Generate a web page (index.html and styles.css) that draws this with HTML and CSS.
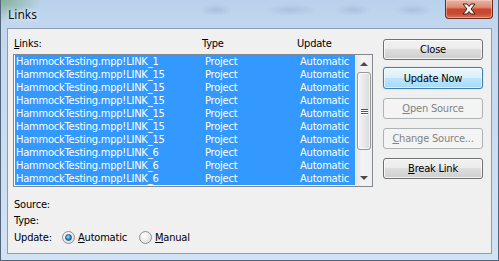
FILE: index.html
```html
<!DOCTYPE html>
<html>
<head>
<meta charset="utf-8">
<link rel="stylesheet" href="styles.css">
</head>
<body>
<div class="window">
  <div class="titlebar">
    <span class="title">Links</span>
    <div class="spacer"></div>
    <div class="close-x">
      <svg width="20" height="12" viewBox="0 0 20 12">
        <path d="M4 1 L8 1 L10 3.5 L12 1 L16 1 L12 6 L16 11 L12 11 L10 8.5 L8 11 L4 11 L8 6 Z" fill="#ffffff" stroke="#3b1a14" stroke-width="1" stroke-linejoin="round"/>
      </svg>
    </div>
  </div>
  <div class="client">
    <div class="leftcol">
      <div class="listhead">
        <span class="hcol hname"><u>L</u>inks:</span>
        <span class="hcol htype">Type</span>
        <span class="hcol hupd">Update</span>
      </div>
      <div class="listbox">
        <div class="rows">
          <div class="row"><span class="cname">HammockTesting.mpp!LINK_1</span><span class="ctype">Project</span><span class="cupd">Automatic</span></div>
          <div class="row"><span class="cname">HammockTesting.mpp!LINK_15</span><span class="ctype">Project</span><span class="cupd">Automatic</span></div>
          <div class="row"><span class="cname">HammockTesting.mpp!LINK_15</span><span class="ctype">Project</span><span class="cupd">Automatic</span></div>
          <div class="row"><span class="cname">HammockTesting.mpp!LINK_15</span><span class="ctype">Project</span><span class="cupd">Automatic</span></div>
          <div class="row"><span class="cname">HammockTesting.mpp!LINK_15</span><span class="ctype">Project</span><span class="cupd">Automatic</span></div>
          <div class="row"><span class="cname">HammockTesting.mpp!LINK_15</span><span class="ctype">Project</span><span class="cupd">Automatic</span></div>
          <div class="row"><span class="cname">HammockTesting.mpp!LINK_15</span><span class="ctype">Project</span><span class="cupd">Automatic</span></div>
          <div class="row"><span class="cname">HammockTesting.mpp!LINK_6</span><span class="ctype">Project</span><span class="cupd">Automatic</span></div>
          <div class="row"><span class="cname">HammockTesting.mpp!LINK_6</span><span class="ctype">Project</span><span class="cupd">Automatic</span></div>
          <div class="row"><span class="cname">HammockTesting.mpp!LINK_6</span><span class="ctype">Project</span><span class="cupd">Automatic</span></div>
        </div>
        <div class="vscroll">
          <div class="sbtn"><span class="arrow-up"></span></div>
          <div class="thumb"><span class="grip"></span><span class="grip"></span><span class="grip"></span></div>
          <div class="track"></div>
          <div class="sbtn"><span class="arrow-down"></span></div>
        </div>
      </div>
      <div class="info">
        <div class="infoline">Source:</div>
        <div class="infoline">Type:</div>
        <div class="infoline radios">
          <span class="ulabel">Update:</span>
          <span class="opt opt-auto"><span class="radio checked"><span class="dot"></span></span><span><u>A</u>utomatic</span></span>
          <span class="opt"><span class="radio"></span><span><u>M</u>anual</span></span>
        </div>
      </div>
    </div>
    <div class="rightcol">
      <div class="btn b-close">Close</div>
      <div class="btn b-update focused">Update Now</div>
      <div class="btn disabled"><span><u>O</u>pen Source</span></div>
      <div class="btn disabled"><span><u>C</u>hange Source...</span></div>
      <div class="btn"><span><u>B</u>reak Link</span></div>
    </div>
  </div>
</div>
</body>
</html>
```

FILE: styles.css
```css
* { box-sizing: border-box; }
html, body { margin: 0; padding: 0; }
body { width: 499px; height: 261px; overflow: hidden; background: #c6dbf0; }

.window {
  width: 499px;
  height: 261px;
  display: flex;
  flex-direction: column;
  border-left: 1px solid #53657c;
  border-right: 1px solid #53657c;
  border-bottom: 1px solid #53657c;
  background:
    radial-gradient(ellipse 40px 22px at 0px 0px, rgba(110,160,110,0.7), rgba(110,160,110,0) 100%),
    linear-gradient(to bottom, #b8d1ec 0px, #c3d8ef 28px, #c8dcf1 120px, #d2e3f4 261px);
  font-family: "DejaVu Sans Condensed", "DejaVu Sans", sans-serif;
  font-size: 11px;
  letter-spacing: -0.2px;
  color: #000;
}

.titlebar {
  height: 28px;
  flex: none;
  display: flex;
  align-items: flex-start;
  background:
    radial-gradient(ellipse 16px 6px at 215px 10px, rgba(110,140,185,0.28), rgba(110,140,185,0) 100%),
    radial-gradient(ellipse 26px 6px at 290px 10px, rgba(110,140,185,0.25), rgba(110,140,185,0) 100%),
    radial-gradient(ellipse 18px 6px at 352px 10px, rgba(110,140,185,0.25), rgba(110,140,185,0) 100%),
    radial-gradient(ellipse 20px 6px at 412px 10px, rgba(110,140,185,0.25), rgba(110,140,185,0) 100%);
}
.title {
  font-family: "Noto Sans", "DejaVu Sans", sans-serif;
  font-size: 12px;
  letter-spacing: 0;
  line-height: 16px;
  margin: 7px 0 0 7px;
  color: #111;
  text-shadow: 0 0 6px #eef5fc, 0 0 3px #eef5fc;
}
.spacer { flex: 1; }

.close-x {
  width: 48px;
  height: 19px;
  margin-right: 5px;
  flex: none;
  border: 1px solid #6b2a1e;
  border-top: none;
  border-radius: 0 0 4px 4px;
  background: linear-gradient(to bottom, #e9b3a6 0%, #df8b76 40%, #c9462c 52%, #c54a32 75%, #d8735a 100%);
  box-shadow: inset 0 0 0 1px rgba(255,220,210,0.45);
  display: flex;
  align-items: center;
  justify-content: center;
}

.client {
  flex: 1;
  margin: 0 6px 6px 6px;
  border: 1px solid #8b9db3;
  background: #f0f0f0;
  display: flex;
  padding-left: 5px;
}

.leftcol {
  width: 360px;
  flex: none;
  display: flex;
  flex-direction: column;
}

.listhead {
  height: 25px;
  padding-top: 8px;
  display: flex;
  line-height: 14px;
}
.hcol { display: block; }
.hname { width: 189px; padding-left: 1px; }
.htype { width: 95px; }
.hupd { flex: 1; }

.listbox {
  height: 133px;
  border: 1px solid #828790;
  background: #ffffff;
  display: flex;
  padding: 0 0 0 1px;
}
.rows {
  flex: 1;
  display: flex;
  flex-direction: column;
}
.row {
  height: 13px;
  line-height: 13px;
  background: #3399ff;
  color: #ffffff;
  display: flex;
  white-space: nowrap;
}
.cname { width: 190px; padding-left: 1px; }
.ctype { width: 95px; }
.cupd { flex: 1; }

.vscroll {
  width: 17px;
  flex: none;
  display: flex;
  flex-direction: column;
  background: linear-gradient(to right, #e6e6e6, #f3f3f3 40%, #efefef);
  border-left: 1px solid #ebebeb;
}
.sbtn {
  height: 17px;
  flex: none;
  display: flex;
  align-items: center;
  justify-content: center;
}
.arrow-up {
  width: 0; height: 0;
  border-left: 4px solid transparent;
  border-right: 4px solid transparent;
  border-bottom: 4px solid #4a4a4a;
}
.arrow-down {
  width: 0; height: 0;
  border-left: 4px solid transparent;
  border-right: 4px solid transparent;
  border-top: 4px solid #4a4a4a;
}
.thumb {
  height: 78px;
  flex: none;
  margin: 0 1px;
  border: 1px solid #979797;
  border-radius: 3px;
  background: linear-gradient(to right, #f4f4f4, #e9e9e9 50%, #d8d8d8);
  box-shadow: inset 0 0 0 1px rgba(255,255,255,0.7);
  display: flex;
  flex-direction: column;
  align-items: center;
  justify-content: center;
  gap: 1px;
}
.grip {
  width: 7px;
  height: 1px;
  background: #555;
  box-shadow: 0 1px 0 #fff;
}
.track { flex: 1; }

.info {
  margin-top: 10px;
  padding-left: 1px;
}
.infoline {
  height: 16px;
  line-height: 16px;
}
.radios {
  display: flex;
  align-items: center;
  height: 17px;
}
.ulabel { width: 48px; }
.opt {
  display: flex;
  align-items: center;
  gap: 3px;
}
.opt-auto { width: 77px; }
.radio {
  width: 13px;
  height: 13px;
  border-radius: 50%;
  border: 1px solid #8e8f8f;
  background: radial-gradient(circle at 40% 35%, #ffffff 0%, #f0f0f0 40%, #d2d2d2 100%);
  display: flex;
  align-items: center;
  justify-content: center;
  flex: none;
}
.radio .dot {
  width: 7px;
  height: 7px;
  border-radius: 50%;
  border: 1px solid #1c4f79;
  background: radial-gradient(circle at 40% 35%, #a8dcff 0%, #3c9ae0 45%, #0f5a97 100%);
}

.rightcol {
  margin-left: 10px;
  padding-top: 10px;
  display: flex;
  flex-direction: column;
  gap: 9px;
}
.btn {
  width: 100px;
  height: 21px;
  border: 1px solid #707070;
  border-radius: 3px;
  background: linear-gradient(to bottom, #f2f2f2 0%, #ebebeb 48%, #dddddd 50%, #cfcfcf 100%);
  box-shadow: inset 0 0 0 1px rgba(255,255,255,0.75);
  display: flex;
  align-items: center;
  justify-content: center;
  line-height: 13px;
  white-space: nowrap;
}
.b-close { margin-bottom: -2px; }
.btn.focused {
  border-color: #3c7fb1;
  background: linear-gradient(to bottom, #eaf6fd 0%, #d9f0fc 48%, #bee6fd 50%, #a7d9f5 100%);
  box-shadow: inset 0 0 0 1px rgba(255,255,255,0.6), 0 0 1px #68b3db;
  height: 22px;
}
.btn.disabled {
  border-color: #adb2b5;
  background: #f4f4f4;
  box-shadow: none;
  color: #838383;
}
```
